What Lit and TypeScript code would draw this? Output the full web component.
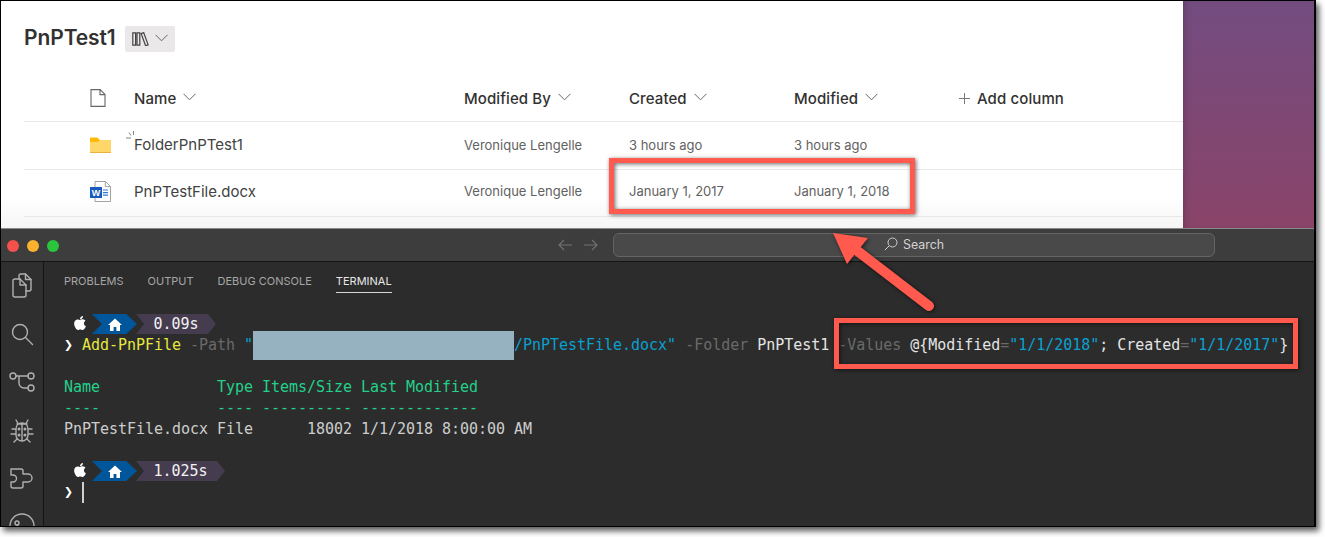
import { LitElement, html, css, svg } from "lit";
import { customElement } from "lit/decorators.js";

const chev = html`<svg class="chev" width="13" height="8" viewBox="0 0 13 8"><path d="M.5.8 6.5 6.8 12.5.8" fill="none" stroke="#666" stroke-width="1"/></svg>`;
const apple = html`<svg class="apple" width="14" height="16" viewBox="0 0 384 512"><path fill="#fff" d="M318.7 268.7c-.2-36.7 16.4-64.4 50-84.8-18.8-26.9-47.2-41.7-84.7-44.6-35.5-2.8-74.3 20.7-88.5 20.7-15 0-49.4-19.7-76.4-19.7C63.3 141.2 4 184.8 4 273.5q0 39.3 14.4 81.2c12.8 36.7 59 126.7 107.2 125.2 25.2-.6 43-17.9 75.8-17.9 31.8 0 48.3 17.9 76.4 17.9 48.6-.7 90.4-82.5 102.6-119.3-65.2-30.7-61.7-90-61.7-91.9zm-56.6-164.2c27.3-32.4 24.8-61.9 24-72.5-24.1 1.4-52 16.4-67.9 34.9-17.5 19.8-27.8 44.3-25.6 71.9 26.1 2 49.9-11.4 69.5-34.3z"/></svg>`;
const home = html`<svg width="14" height="13" viewBox="0 0 14 13"><path fill="#fff" d="M7 .5 0 7h2v6h3.6V9h2.8v4H12V7h2z"/></svg>`;

const prompt = (t: string, w: number) => html`<div class="prompt">
  ${apple}
  <span class="seg blue">${home}</span>
  <span class="seg plum" style="width:${w}px">${t}</span>
</div>`;

const ic = (body: unknown) => html`<svg class="act" width="30" height="30" viewBox="0 0 30 30" fill="none" stroke="#b0b0b0" stroke-width="1.4" stroke-linejoin="round" stroke-linecap="round">${body}</svg>`;

@customElement("app-root")
export class AppRoot extends LitElement {
  static styles = css`
    :host { display: block; width: 1325px; height: 537px; background: #fff; position: relative; overflow: hidden; }
    .win { width: 1316px; height: 527px; box-sizing: border-box; border: 1px solid #000; border-right-width: 2px; display: flex; flex-direction: column; box-shadow: 3px 4px 6px rgba(0,0,0,.65); background: #2c2c2c; }
    .top { height: 227px; display: flex; flex: none; }
    .sp { flex: 1; min-width: 0; background: linear-gradient(#fff 196px, #f5f5f5 227px); font-family: Inter, "Liberation Sans", sans-serif; color: #333; padding-left: 23px; }
    .wall { width: 131px; flex: none; background: linear-gradient(#734c80, #8a4469); box-shadow: inset 6px 0 8px -6px rgba(0,0,0,.25); }
    .title { height: 76px; display: flex; align-items: flex-start; gap: 9px; padding-top: 25px; box-sizing: border-box; }
    h1 { margin: 0; font-size: 21px; font-weight: 600; line-height: 24px; color: #323130; letter-spacing: -.1px; }
    .lib { width: 50px; height: 26px; border-radius: 2px; background: #eae8e8; display: flex; align-items: center; justify-content: center; gap: 6px; }
    .row { display: grid; grid-template-columns: 66px 44px 330px 165px 165px 165px 1fr; align-items: center; border-bottom: 1px solid #e9e8e8; box-sizing: border-box; }
    .head { height: 45px; padding-bottom: 2px; font-size: 15px; font-weight: 500; color: #323130; letter-spacing: .1px; }
    .r1 { height: 48px; padding-bottom: 2px; }
    .r2 { height: 47px; padding-bottom: 4px; }
    .row > span { display: flex; align-items: center; gap: 7px; }
    .name { font-size: 15px; color: #424242; position: relative; }
    .sm { font-size: 13px; color: #626262; }
    .chev { margin-top: -3px; }
    .spark { position: absolute; left: -8px; top: -4px; }
    .icon { display: flex; }

    .bar { height: 34px; flex: none; background: #3e3d3d; border-top: 1px solid #8a8a8a; border-bottom: 1px solid #141414; box-sizing: border-box; display: flex; align-items: center; padding-left: 6px; font-family: Inter, "Liberation Sans", sans-serif; }
    .dots { display: flex; gap: 8px; width: 551px; flex: none; margin-top: 1px; }
    .dots i { width: 12px; height: 12px; border-radius: 50%; }
    .nav { display: flex; gap: 12px; width: 55px; flex: none; }
    .search { width: 602px; height: 24px; padding-bottom: 2px; box-sizing: border-box; border: 1px solid #646464; border-radius: 6px; background: #4a4949; display: flex; align-items: center; justify-content: center; gap: 5px; font-size: 12.4px; color: #d2d2d2; }

    .body { flex: 1; min-height: 0; display: flex; }
    .side { flex: none; background: #2f2f2f; border-right: 1px solid #141414; box-sizing: border-box; width: 43px; display: flex; flex-direction: column; align-items: center; padding-top: 9px; gap: 18px; overflow: hidden; }
    .act { flex: none; display: block; }
    .term { flex: 1; min-width: 0; padding-left: 20px; background: #2c2c2c; }
    .tabs { display: flex; gap: 24px; height: 31px; font: 400 11px/38px Inter, "Liberation Sans", sans-serif; color: #a6a6a6; }
    .tabs .on { color: #e8e8e8; border-bottom: 1px solid #d8d8d8; }
    .out { padding-top: 21px; font: 400 15px/21px "DejaVu Sans Mono", "Liberation Mono", monospace; letter-spacing: -.03px; color: #cdcdcd; }
    .l { height: 21px; white-space: pre; }
    .prompt { height: 21px; display: flex; align-items: center; padding-left: 9px; }
    .apple { margin-right: 3px; margin-top: -3px; }
    .seg { height: 20px; margin-top: -1px; display: flex; align-items: center; justify-content: center; color: #f2f2f2; font-size: 15px; }
    .blue { width: 45px; background: #00569b; clip-path: polygon(0 0, 76% 0, 100% 50%, 76% 100%, 0 100%, 22% 50%); margin-left: 2px; }
    .plum { background: #463c50; clip-path: polygon(0 0, calc(100% - 8px) 0, 100% 50%, calc(100% - 8px) 100%, 0 100%, 8px 50%); margin-left: -1px; }
    .y { color: #e8e73f; }
    .g { color: #6a6a6a; }
    .c { color: #0aa0cf; }
    .gr { color: #23d18b; }
    .w { color: #e4e4e4; }
    .br { color: #fff; font-weight: 700; }
    .red { display: inline-block; width: 261px; height: 29px; margin: -4px 0; vertical-align: middle; background: #96b2c0; }
    .cur { display: inline-block; width: 1px; height: 21px; background: #cfcfcf; vertical-align: top; border-left: 1px solid #cfcfcf; }
    .anno { position: absolute; left: 0; top: 0; pointer-events: none; }
  `;

  render() {
    return html`<div class="win">
      <div class="top">
        <div class="sp">
          <div class="title">
            <h1>PnPTest1</h1>
            <div class="lib">
              <svg width="17" height="14" viewBox="0 0 17 14" fill="none" stroke="#444" stroke-width="1.2"><path d="M.8.8h2.800v12.400H.8zM5 .8h2.800v12.400H5zM9.200 1.600l2.500-1 4.400 12.200-2.500 1z"/></svg>
              ${chev}
            </div>
          </div>
          <div class="row head">
            <span></span>
            <span class="icon"><svg width="16" height="18" viewBox="0 0 16 18" fill="none" stroke="#666" stroke-width="1.1"><path d="M1 .6h9.200L15 5.400v12H1zM10 .8V5.600h5"/></svg></span>
            <span>Name ${chev}</span>
            <span>Modified By ${chev}</span>
            <span>Created ${chev}</span>
            <span>Modified ${chev}</span>
            <span><svg width="11" height="11" viewBox="0 0 11 11"><path d="M5.500 0v11M0 5.500h11" stroke="#777" stroke-width="1"/></svg><span>Add column</span></span>
          </div>
          <div class="row r1">
            <span></span>
            <span class="icon"><svg width="21" height="16" viewBox="0 0 21 16"><path fill="#ffd768" d="M0 3h21v12.400H0z"/><path fill="#ffb900" d="M0 1.500C0 .8.500.4 1 .4h5.500c.6 0 1 .2 1.400.6L10 3 7.500 5H0z"/><path fill="#e8b33a" d="M0 15h21v1H0z"/></svg></span>
            <span class="name"><svg class="spark" width="10" height="11" viewBox="0 0 10 11" stroke="#666" stroke-width=".8"><path d="M7.500 0v4M3 1.500l2 3M0 7h5"/></svg>FolderPnPTest1</span>
            <span class="sm">Veronique Lengelle</span>
            <span class="sm">3 hours ago</span>
            <span class="sm">3 hours ago</span>
            <span></span>
          </div>
          <div class="row r2">
            <span></span>
            <span class="icon"><svg width="21" height="21" viewBox="0 0 21 21"><path fill="#fff" stroke="#8a8a8a" stroke-width=".8" d="M5 .5h10.500l5 5v15H5z"/><path fill="none" stroke="#8a8a8a" stroke-width=".8" d="M15.300.6v5h5"/><path stroke="#2b7cd3" stroke-width="1.2" d="M13 9h5M13 11.600h5M13 14.200h5"/><path fill="#185abd" d="M0 6h12v11H0z"/><text x="6" y="15" font-family="Liberation Sans" font-size="9" font-weight="700" fill="#fff" text-anchor="middle">W</text></svg></span>
            <span class="name">PnPTestFile.docx</span>
            <span class="sm">Veronique Lengelle</span>
            <span class="sm">January 1, 2017</span>
            <span class="sm">January 1, 2018</span>
            <span></span>
          </div>
        </div>
        <div class="wall"></div>
      </div>
      <div class="bar">
        <div class="dots"><i style="background:#f4504c"></i><i style="background:#f9b12e"></i><i style="background:#2bc53d"></i></div>
        <div class="nav">
          <svg width="14" height="12" viewBox="0 0 14 12" fill="none" stroke="#737373" stroke-width="1.1"><path d="M14 6H1M6 1 1 6l5 5"/></svg>
          <svg width="14" height="12" viewBox="0 0 14 12" fill="none" stroke="#737373" stroke-width="1.1"><path d="M0 6h13M8 1l5 5-5 5"/></svg>
        </div>
        <div class="search">
          <svg width="14" height="14" viewBox="0 0 14 14" fill="none" stroke="#cfcfcf" stroke-width="1"><circle cx="8.500" cy="5.500" r="4.500"/><path d="M5.200 8.800.8 13.200"/></svg>
          <span>Search</span>
        </div>
      </div>
      <div class="body">
        <div class="side">
          ${ic(svg`<path d="M12 8V5a2 2 0 0 1 2-2h4.500L24 8.500V18a2 2 0 0 1-2 2h-3"/><path d="M18.500 3v5.500H24"/><path d="M6 10a2 2 0 0 1 2-2h5l6 6v10a2 2 0 0 1-2 2H8a2 2 0 0 1-2-2z"/><path d="M13 8v6h6"/>`)}
          ${ic(svg`<circle cx="13" cy="13" r="7.500"/><path d="m18.500 18.500 7 7"/>`)}
          ${ic(svg`<circle cx="6" cy="9" r="3"/><circle cx="24" cy="9" r="3"/><circle cx="24" cy="21" r="3"/><path d="M9 9h12M12 9v7a5 5 0 0 0 5 5h4"/>`)}
          ${ic(svg`<path d="M15 8c3.500 0 6 2.500 6 6v6a6 6 0 0 1-12 0v-6c0-3.500 2.500-6 6-6zM15 8v18M11 8.500 9 5M19 8.500 21 5M9 14H5M21 14h4M9 19H4M21 19h5M10 24l-3 3M20 24l3 3M10 9h10"/><circle cx="12" cy="14" r=".8"/><circle cx="18" cy="14" r=".8"/><circle cx="12" cy="20" r=".8"/><circle cx="18" cy="20" r=".8"/>`)}
          ${ic(svg`<path d="M4 6h10a2 2 0 0 1 2 2v3h5a4 4 0 0 1 0 8h-5v4a2 2 0 0 1-2 2H6a2 2 0 0 1-2-2v-4h2a3.500 3.500 0 0 0 0-7H4z"/>`)}
          ${ic(svg`<circle cx="15" cy="15" r="12"/><circle cx="10" cy="12" r="2"/><path d="M10 14l4 7 5 2M9 21l3-3"/>`)}
        </div>
        <div class="term">
          <div class="tabs"><span>PROBLEMS</span><span>OUTPUT</span><span>DEBUG CONSOLE</span><span class="on">TERMINAL</span></div>
          <div class="out">
            ${prompt("0.09s", 80)}
            <div class="l"><span class="br">❯</span> <span class="y">Add-PnPFile</span> <span class="g">-Path</span> <span class="c">"</span><span class="red"></span><span class="c">/PnPTestFile.docx"</span> <span class="g">-Folder</span> <span class="w">PnPTest1</span> <span class="g">-Values</span> <span class="w">@{Modified</span><span class="g">=</span><span class="c">"1/1/2018"</span><span class="w">; Created</span><span class="g">=</span><span class="c">"1/1/2017"</span><span class="w">}</span></div>
            <div class="l"> </div>
            <div class="l gr">Name             Type Items/Size Last Modified</div>
            <div class="l gr">----             ---- ---------- -------------</div>
            <div class="l">PnPTestFile.docx File      18002 1/1/2018 8:00:00 AM</div>
            <div class="l"> </div>
            ${prompt("1.025s", 89)}
            <div class="l"><span class="br">❯</span> <span class="cur"></span></div>
          </div>
        </div>
      </div>
    </div>
    <svg class="anno" width="1325" height="537" viewBox="0 0 1325 537" fill="none" style="filter:drop-shadow(1px 1px 2px rgba(0,0,0,.6))">
      <rect x="611.500" y="160.500" width="301" height="51" stroke="#ff5a4d" stroke-width="5"/>
      <rect x="836.500" y="320.500" width="459" height="46" stroke="#ff5a4d" stroke-width="5"/>
      <path d="M929 306 851 246" stroke="#ff5a4d" stroke-width="10" stroke-linecap="round"/>
      <path d="M833 233 868 238 847 264z" fill="#ff5a4d"/>
    </svg>`;
  }
}
